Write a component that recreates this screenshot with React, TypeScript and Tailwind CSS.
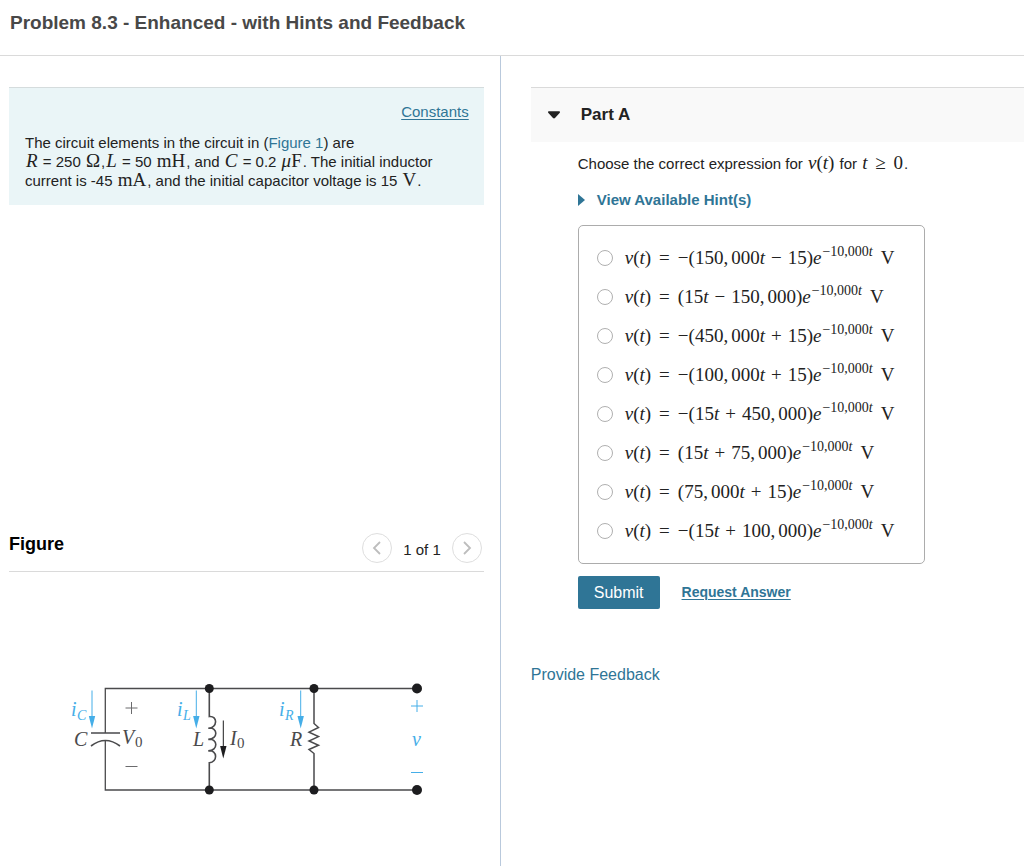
import { useState } from "react";
import type { ReactNode } from "react";

type Option = { id: string; lead: string; a: ReactNode; op: string; b: ReactNode };

const T = () => <i>t</i>;

// thousands separator with a thin math space after it
const K = () => <span className="mr-[3px]">,</span>;

const options: Option[] = [
  { id: "a", lead: "−(", a: <>150<K />000<T /></>, op: "−", b: "15" },
  { id: "b", lead: "(", a: <>15<T /></>, op: "−", b: <>150<K />000</> },
  { id: "c", lead: "−(", a: <>450<K />000<T /></>, op: "+", b: "15" },
  { id: "d", lead: "−(", a: <>100<K />000<T /></>, op: "+", b: "15" },
  { id: "e", lead: "−(", a: <>15<T /></>, op: "+", b: <>450<K />000</> },
  { id: "f", lead: "(", a: <>15<T /></>, op: "+", b: <>75<K />000</> },
  { id: "g", lead: "(", a: <>75<K />000<T /></>, op: "+", b: "15" },
  { id: "h", lead: "−(", a: <>15<T /></>, op: "+", b: <>100<K />000</> },
];

function M({ children }: { children: ReactNode }) {
  return (
    <span className="px-px font-['Liberation_Serif',serif] text-[19px] leading-[0]">{children}</span>
  );
}

function Expression({ option }: { option: Option }) {
  return (
    <span className="whitespace-nowrap font-['Liberation_Serif',serif] text-[19px] leading-6">
      <i>v</i>(<T />)<span className="mx-2">=</span>
      {option.lead}
      {option.a}
      <span className="mx-[6px]">{option.op}</span>
      {option.b})<i>e</i>
      <sup className="-top-2 ml-px text-[14px]">
        −10,000
        <T />
      </sup>
      <span className="ml-2">V</span>
    </span>
  );
}

function Arrow({ x, y, color }: { x: number; y: number; color: string }) {
  return (
    <g>
      <path d={`M${x} ${y}v27`} stroke={color} strokeWidth="1" fill="none" />
      <path d={`M${x - 3.2} ${y + 25.5}h6.4l-3.2 12.5z`} fill={color} />
    </g>
  );
}

function Circuit() {
  const ink = "#4a4a4c";
  const blue = "#45aee8";
  return (
    <svg
      width="370"
      height="120"
      viewBox="0 0 370 120"
      role="img"
      aria-label="Parallel RLC circuit"
      className="font-['Liberation_Serif',serif] italic"
    >
      <g fill="none" stroke={ink} strokeWidth="1.3">
        <path d="M357 8.5H45.3V53M45.3 60.5V110H357" />
        <path d="M31 53h29M31 66q14.3-11 29 0" strokeWidth="1.6" />
        <path
          d="M149.3 8.5v28c8.5-1 8.5 11.5-1 11.7c10-1.5 10 11.2 0 11.2c10-1.5 10 11.5 0 11.5c9.5-1.5 9.5 11.5 1 11.8V110"
          strokeWidth="1.6"
        />
        <path
          d="M254 8.5v35l4.5 4-9.5 4.7 9.5 4.4-9.5 4.4 9.5 4.2-9.5 4.3 5 4V110"
          strokeWidth="1.5"
        />
      </g>
      <g fill="#1d1d1f">
        <circle cx="149.3" cy="8.5" r="4.5" />
        <circle cx="149.3" cy="110" r="4.5" />
        <circle cx="254" cy="8.5" r="4.5" />
        <circle cx="254" cy="110" r="4.5" />
        <circle cx="357" cy="8.5" r="5" />
        <circle cx="357" cy="110" r="5" />
      </g>
      <Arrow x={32} y={10.5} color={blue} />
      <Arrow x={136.3} y={10.5} color={blue} />
      <Arrow x={240.7} y={10.5} color={blue} />
      <Arrow x={163.3} y={40.5} color="#1d1d1f" />
      <g stroke="#6b6b6d" strokeWidth="1">
        <path d="M65.5 28h12M71.5 22v12M65.5 86.5h12" />
        <path d="M351 26h12M357 20v12M351 92.5h12" stroke={blue} />
      </g>
      <g fill={blue} fontSize="20">
        <text x="11" y="36">i</text>
        <text x="17" y="40" fontSize="14">C</text>
        <text x="117" y="36">i</text>
        <text x="123" y="40" fontSize="14">L</text>
        <text x="219" y="36">i</text>
        <text x="225" y="40" fontSize="14">R</text>
        <text x="352" y="66">v</text>
      </g>
      <g fill={ink} fontSize="20">
        <text x="14" y="66">C</text>
        <text x="62" y="64">V</text>
        <text x="75" y="67" fontSize="15" fontStyle="normal">0</text>
        <text x="133" y="66">L</text>
        <text x="170" y="65">I</text>
        <text x="177" y="68" fontSize="15" fontStyle="normal">0</text>
        <text x="230" y="66">R</text>
      </g>
    </svg>
  );
}

function PagerButton({ label, d }: { label: string; d: string }) {
  return (
    <button
      type="button"
      aria-label={label}
      className="flex size-[30px] items-center justify-center rounded-full border border-[#dedede] bg-white"
    >
      <svg width="14" height="14" viewBox="0 0 14 14" fill="none" stroke="#bdbdbd" strokeWidth="1.8">
        <path d={d} />
      </svg>
    </button>
  );
}

export default function App() {
  const [answer, setAnswer] = useState("");

  return (
    <div className="flex min-h-screen flex-col bg-white font-['Liberation_Sans',Arial,sans-serif] text-[15px] text-[#222]">
      <header className="border-b border-[#dadada] px-[10px] pt-[11px] pb-5">
        <h1 className="text-[19px] leading-6 font-bold text-[#484848]">
          Problem 8.3 - Enhanced - with Hints and Feedback
        </h1>
      </header>

      <div className="flex flex-1">
        <section className="w-[48.9%] shrink-0 border-r border-[#b9c9dc] pt-[31px] pr-4 pl-[9px]">
          <div className="border-t border-[#d5dcdd] bg-[#eaf5f7] pt-[14px] pr-[15px] pb-[15px] pl-4">
            <div className="mb-[11px] text-right leading-5">
              <a href="#constants" className="text-[#2f7596] underline underline-offset-2">
                Constants
              </a>
            </div>
            <p className="leading-[19px]">
              The circuit elements in the circuit in (
              <a href="#figure" className="text-[#2f7596]">Figure 1</a>) are
              <br />
              <M><i>R</i></M> = 250 <M>Ω</M>,<M><i>L</i></M> = 50 <M>mH</M>, and{" "}
              <M><i>C</i></M> = 0.2 <M><i>μ</i>F</M>. The initial inductor
              <br />
              current is -45 <M>mA</M>, and the initial capacitor voltage is 15 <M>V</M>.
            </p>
          </div>

          {/* figure viewer */}
          <div id="figure" className="mt-[327px]">
            <div className="flex items-center justify-between border-b border-[#dadada] pr-[2px] pb-[7px]">
              <h2 className="pb-2 text-[18px] leading-6 font-bold text-black">Figure</h2>
              <div className="flex items-center gap-[11px]">
                <PagerButton label="Previous figure" d="M10 1 4 7l6 6" />
                <span className="pt-1 leading-5">1 of 1</span>
                <PagerButton label="Next figure" d="M4 1l6 6-6 6" />
              </div>
            </div>
            <div className="mt-[108px] pl-[51px]">
              <Circuit />
            </div>
          </div>
        </section>

        <main className="min-w-0 flex-1 pt-[31px] pl-[30px]">
          <div className="flex items-center gap-5 border-t border-[#dadada] bg-[#f9f9f9] py-[15px] pl-4">
            <button type="button" aria-label="Collapse Part A" className="flex">
              <svg width="14" height="8" viewBox="0 0 14 8" fill="#222">
                <path d="M1 1q0-.7.8-.7h10.4q.8 0 .8.7 0 .5-.4.9L8 7q-1 .8-2 0L1.4 1.9Q1 1.5 1 1z" />
              </svg>
            </button>
            <h2 className="text-[17px] leading-6 font-bold">Part A</h2>
          </div>

          <form className="pt-[10px] pl-[47px]" onSubmit={(e) => e.preventDefault()}>
            <p className="leading-6">
              Choose the correct expression for <M><i>v</i>(<T />)</M> for{" "}
              <M><T /> <span className="mx-[3px]">≥</span> 0</M>.
            </p>
            <button
              type="button"
              className="mt-3 flex items-center gap-3 leading-6 font-bold text-[#2f7596]"
            >
              <svg width="7" height="12" viewBox="0 0 7 12" fill="currentColor">
                <path d="M0 0 7 6 0 12z" />
              </svg>
              View Available Hint(s)
            </button>

            <fieldset
              aria-label="Answer choices"
              className="mt-[13px] w-[347px] max-w-full rounded-[5px] border border-[#acacac] px-[18px] pt-3 pb-[13px]"
            >
              {options.map((o) => (
                <label key={o.id} className="flex h-[39px] items-center gap-3">
                  <input
                    type="radio"
                    name="answer"
                    value={o.id}
                    checked={answer === o.id}
                    onChange={() => setAnswer(o.id)}
                    className="size-4 shrink-0 appearance-none rounded-full border border-[#b0b0b0] bg-white checked:border-[5px] checked:border-[#2f7596]"
                  />
                  <Expression option={o} />
                </label>
              ))}
            </fieldset>

            <div className="mt-3 flex items-center gap-[22px]">
              <button
                type="submit"
                className="rounded-[2px] bg-[#2f7596] px-4 py-1 text-[16px] leading-[25px] text-white"
              >
                Submit
              </button>
              <a href="#answer" className="text-[14px] font-bold text-[#2f7596] underline underline-offset-2">
                Request Answer
              </a>
            </div>
          </form>

          <a href="#feedback" className="mt-[54px] inline-block text-[16px] leading-6 text-[#2f7596]">
            Provide Feedback
          </a>
        </main>
      </div>
    </div>
  );
}
